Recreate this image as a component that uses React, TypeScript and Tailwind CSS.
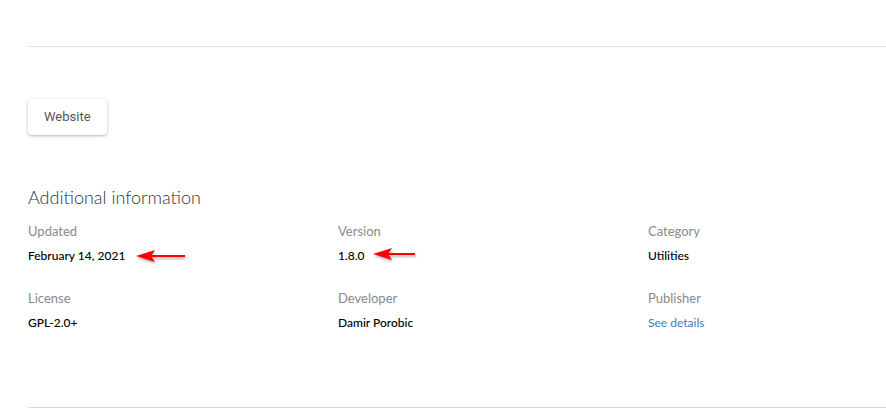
import React from "react";

type Info = { label: string; value: string; link?: boolean };

const rows: Info[][] = [
  [
    { label: "Updated", value: "February 14, 2021" },
    { label: "Version", value: "1.8.0" },
    { label: "Category", value: "Utilities" },
  ],
  [
    { label: "License", value: "GPL-2.0+" },
    { label: "Developer", value: "Damir Porobic" },
    { label: "Publisher", value: "See details", link: true },
  ],
];

function Arrow({ width }: { width: number }) {
  return (
    <svg width={width + 4} height="16" viewBox={`0 0 ${width + 4} 16`} style={{ filter: "drop-shadow(1px 2px 1px rgba(0,0,0,0.3))" }}>
      <polygon points="0,7 19,1 15,7 19,13" fill="#ff0000" />
      <rect x="14" y="6" width={width - 14} height="2" fill="#ff0000" />
    </svg>
  );
}

export default function App() {
  return (
    <div className="w-[886px] h-[412px] overflow-hidden bg-white" style={{ fontFamily: 'Lato, "Noto Sans", sans-serif' }}>
      <div className="ml-[28px] pt-[46px]">
        <div className="h-px bg-[#e3e3e3]" />
        <div className="pt-[52px]">
          <button
            className="h-[36px] px-[16px] rounded-[4px] bg-white text-[13px] text-[#555] shadow-[0_1px_3px_rgba(0,0,0,0.3)]"
            style={{ fontFamily: "Roboto, sans-serif" }}
          >
            Website
          </button>
        </div>
        <h2 className="mt-[50px] text-[18px] font-light text-[#333] leading-[24px]">Additional information</h2>
        <div className="mt-[14px] flex flex-col gap-[26px]">
          {rows.map((row, i) => (
            <div key={i} className="grid grid-cols-[310px_310px_1fr]">
              {row.map((item) => (
                <div key={item.label} className="relative">
                  <div className="text-[13px] text-[#8a8a8a] leading-[16px]">{item.label}</div>
                  <div
                    className={`mt-[9px] text-[12px] leading-[16px] ${item.link ? "text-[#3d7cc9]" : "text-[#000] font-medium"}`}
                  >
                    {item.value}
                  </div>
                  {item.label === "Updated" && (
                    <div className="absolute left-[108px] top-[26px]">
                      <Arrow width={49} />
                    </div>
                  )}
                  {item.label === "Version" && (
                    <div className="absolute left-[35px] top-[24px]">
                      <Arrow width={42} />
                    </div>
                  )}
                </div>
              ))}
            </div>
          ))}
        </div>
        <div className="mt-[76px] h-px bg-[#dcdcdc]" />
      </div>
    </div>
  );
}
